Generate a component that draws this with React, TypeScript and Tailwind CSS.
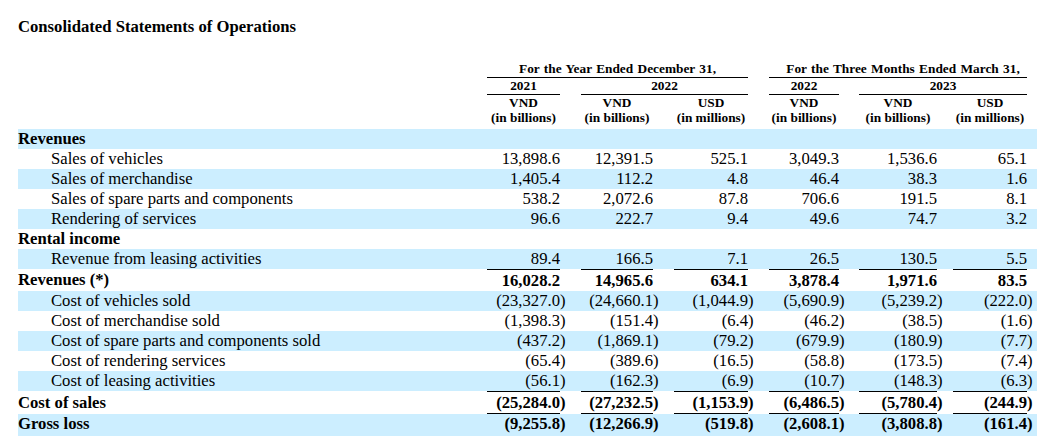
import React from "react";

const COLS = [
  "w-[73px]",
  "ml-[21px] w-[72px]",
  "ml-[21px] w-[74px]",
  "ml-[21px] w-[70px]",
  "ml-[20px] w-[78px]",
  "ml-[16px] w-[74px]",
];

type RowKind = "normal" | "total" | "costTotal" | "final" | "section";

type RowDef = {
  label: string;
  indent?: boolean;
  bold?: boolean;
  kind: RowKind;
  values?: string[];
};

const ROWS: RowDef[] = [
  { label: "Revenues", bold: true, kind: "section" },
  { label: "Sales of vehicles", indent: true, kind: "normal", values: ["13,898.6", "12,391.5", "525.1", "3,049.3", "1,536.6", "65.1"] },
  { label: "Sales of merchandise", indent: true, kind: "normal", values: ["1,405.4", "112.2", "4.8", "46.4", "38.3", "1.6"] },
  { label: "Sales of spare parts and components", indent: true, kind: "normal", values: ["538.2", "2,072.6", "87.8", "706.6", "191.5", "8.1"] },
  { label: "Rendering of services", indent: true, kind: "normal", values: ["96.6", "222.7", "9.4", "49.6", "74.7", "3.2"] },
  { label: "Rental income", bold: true, kind: "section" },
  { label: "Revenue from leasing activities", indent: true, kind: "normal", values: ["89.4", "166.5", "7.1", "26.5", "130.5", "5.5"] },
  { label: "Revenues (*)", bold: true, kind: "total", values: ["16,028.2", "14,965.6", "634.1", "3,878.4", "1,971.6", "83.5"] },
  { label: "Cost of vehicles sold", indent: true, kind: "normal", values: ["(23,327.0)", "(24,660.1)", "(1,044.9)", "(5,690.9)", "(5,239.2)", "(222.0)"] },
  { label: "Cost of merchandise sold", indent: true, kind: "normal", values: ["(1,398.3)", "(151.4)", "(6.4)", "(46.2)", "(38.5)", "(1.6)"] },
  { label: "Cost of spare parts and components sold", indent: true, kind: "normal", values: ["(437.2)", "(1,869.1)", "(79.2)", "(679.9)", "(180.9)", "(7.7)"] },
  { label: "Cost of rendering services", indent: true, kind: "normal", values: ["(65.4)", "(389.6)", "(16.5)", "(58.8)", "(173.5)", "(7.4)"] },
  { label: "Cost of leasing activities", indent: true, kind: "normal", values: ["(56.1)", "(162.3)", "(6.9)", "(10.7)", "(148.3)", "(6.3)"] },
  { label: "Cost of sales", bold: true, kind: "costTotal", values: ["(25,284.0)", "(27,232.5)", "(1,153.9)", "(6,486.5)", "(5,780.4)", "(244.9)"] },
  { label: "Gross loss", bold: true, kind: "final", values: ["(9,255.8)", "(12,266.9)", "(519.8)", "(2,608.1)", "(3,808.8)", "(161.4)"] },
];

function Num({ v }: { v: string }) {
  if (v.endsWith(")")) {
    return (
      <>
        {v.slice(0, -1)}
        <span className="inline-block w-0">)</span>
      </>
    );
  }
  return <>{v}</>;
}

function rowHeight(kind: RowKind) {
  if (kind === "total") return "h-[22px]";
  if (kind === "costTotal") return "h-[23px]";
  if (kind === "final") return "h-[22px]";
  return "h-[20px]";
}

function cellClass(kind: RowKind) {
  if (kind === "total") return "h-[22px] border-t border-black leading-[21px]";
  if (kind === "costTotal") return "h-[23px] border-t border-b border-black leading-[21px]";
  if (kind === "final") return "h-[22px] leading-[20px]";
  return "h-[20px] leading-[20px]";
}

function labelLeading(kind: RowKind) {
  if (kind === "total") return "leading-[22px]";
  if (kind === "costTotal") return "leading-[23px]";
  return "leading-[20px]";
}

export default function App() {
  return (
    <div className="bg-white w-[1048px] h-[436px] overflow-hidden pl-[18px] pt-[17px] text-black font-['Liberation_Serif','Times_New_Roman',serif]">
      <div className="text-[16.67px] font-bold leading-[20px]">Consolidated Statements of Operations</div>

      <div className="mt-[23px] text-[13.33px] font-bold">
        <div className="flex h-[18px] [word-spacing:1px]">
          <div className="w-[469px]" />
          <div className="w-[261px] border-b border-black text-center leading-[17px] whitespace-nowrap">
            For the Year Ended December 31,
          </div>
          <div className="ml-[21px] w-[258px] border-b border-black text-center pl-[10px] leading-[17px] whitespace-nowrap">
            For the Three Months Ended March 31,
          </div>
        </div>
        <div className="flex h-[17px]">
          <div className="w-[469px]" />
          <div className="w-[73px] border-b border-black text-center leading-[16px]">2021</div>
          <div className="ml-[21px] w-[167px] border-b border-black text-center leading-[16px]">2022</div>
          <div className="ml-[21px] w-[70px] border-b border-black text-center leading-[16px]">2022</div>
          <div className="ml-[20px] w-[168px] border-b border-black text-center leading-[16px]">2023</div>
        </div>
        <div className="flex h-[34px]">
          <div className="w-[469px]" />
          {COLS.map((c, i) => {
            const usd = i === 2 || i === 5;
            return (
              <div key={i} className={`${c} text-center leading-[15px] whitespace-nowrap`}>
                <div>{usd ? "USD" : "VND"}</div>
                <div>{usd ? "(in millions)" : "(in billions)"}</div>
              </div>
            );
          })}
        </div>
      </div>

      <div className="text-[16.67px] w-[1019px]">
        {ROWS.map((r, idx) => {
          const blue = idx % 2 === 0;
          return (
            <div
              key={idx}
              className={`flex ${rowHeight(r.kind)} ${blue ? "bg-[#cceeff]" : "bg-white"} ${r.bold ? "font-bold" : ""}`}
            >
              <div className={`w-[469px] whitespace-nowrap ${r.indent ? "pl-[33px]" : ""} ${labelLeading(r.kind)}`}>
                {r.label}
              </div>
              {r.values &&
                r.values.map((v, i) => (
                  <div key={i} className={`${COLS[i]} ${cellClass(r.kind)} text-right whitespace-nowrap`}>
                    <Num v={v} />
                  </div>
                ))}
            </div>
          );
        })}
      </div>
    </div>
  );
}
